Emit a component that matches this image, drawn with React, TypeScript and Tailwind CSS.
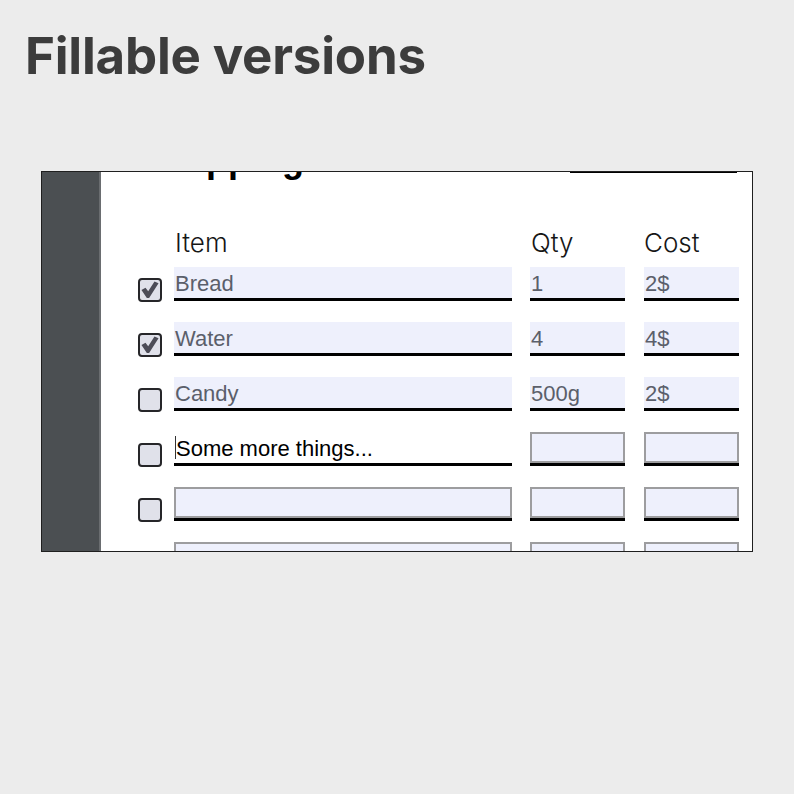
const rows = [
  { checked: true, item: 'Bread', qty: '1', cost: '2$', kind: 'filled' },
  { checked: true, item: 'Water', qty: '4', cost: '4$', kind: 'filled' },
  { checked: false, item: 'Candy', qty: '500g', cost: '2$', kind: 'filled' },
  { checked: false, item: 'Some more things...', qty: '', cost: '', kind: 'typing' },
  { checked: false, item: '', qty: '', cost: '', kind: 'empty' },
  { checked: false, item: '', qty: '', cost: '', kind: 'empty' },
];

function Checkbox({ checked }: { checked: boolean }) {
  return (
    <div className="w-[24px] h-[24px] shrink-0 rounded-[4px] border-[2.5px] border-[#262629] bg-[#e0e1ea] flex items-center justify-center">
      {checked && (
        <svg viewBox="0 0 20 20" className="w-[18px] h-[18px]">
          <path d="M0.5 10 L5 7.5 L8 11.5 L15 0.5 L19.5 2.5 L9 19 L6.5 19 Z" fill="#4c4c57" />
        </svg>
      )}
    </div>
  );
}

// one form field: light fill, optional grey box, black rule underneath
function Field({ width, text, boxed, plain, caret }: { width: string; text?: string; boxed?: boolean; plain?: boolean; caret?: boolean }) {
  return (
    <div className={`${width} shrink-0 flex flex-col`}>
      <div
        className={`h-[31px] flex items-center pl-[1px] text-[22px] leading-[31px] ${
          plain ? 'bg-white text-black' : 'bg-[#eef0fc] text-[#5b5f6b]'
        } ${boxed ? 'border-2 border-[#9d9d9f]' : ''}`}
      >
        {caret && <span className="w-px h-[23px] bg-[#333]" />}
        {text && <span className="pt-[1px]">{text}</span>}
      </div>
      <div className="h-[3px] bg-black" />
    </div>
  );
}

export default function App() {
  return (
    <div className="w-[794px] h-[794px] bg-[#ececec] overflow-hidden" style={{ fontFamily: 'Inter, sans-serif' }}>
      <h1 className="pl-[25px] pt-[30px] text-[51px] leading-[51px] font-bold text-[#3c3c3c] tracking-[-0.2px]">
        Fillable versions
      </h1>

      <div className="ml-[41px] mt-[90px] w-[712px] h-[381px] border-[1.5px] border-[#1f1f1f] bg-white flex overflow-hidden">
        <div className="w-[59px] shrink-0 bg-[#4b4f52] border-r-2 border-[#6a6d70]" />

        <div className="flex-1 flex flex-col pl-[37px]">
          {/* page title, scrolled mostly out of view */}
          <div
            className="-mt-[30px] h-[36px] flex items-start text-[36px] leading-[36px] font-bold text-black"
            style={{ fontFamily: '"Liberation Sans", Arial, sans-serif' }}
          >
            <span className="w-[362px] shrink-0">Shopping List</span>
            <span className="w-[70px] shrink-0 -mt-[2px]">Date</span>
            <span className="mt-[29px] w-[167px] h-[2px] bg-black" />
          </div>

          <div className="mt-[52px] flex text-[26px] leading-[26px] font-light text-[#161616]">
            <span className="ml-[36px] w-[356px] pl-[1px]">Item</span>
            <span className="w-[114px] pl-[1px]">Qty</span>
            <span>Cost</span>
          </div>

          <div
            className="mt-[11px] flex flex-col gap-[21px]"
            style={{ fontFamily: '"Liberation Sans", Arial, sans-serif' }}
          >
            {rows.map((r, i) => (
              <div key={i} className="flex items-end">
                <div className="mb-[-1px]">
                  <Checkbox checked={r.checked} />
                </div>
                <div className="ml-[12px]">
                  <Field
                    width="w-[338px]"
                    text={r.item}
                    plain={r.kind === 'typing'}
                    caret={r.kind === 'typing'}
                    boxed={r.kind === 'empty'}
                  />
                </div>
                <div className="ml-[18px]">
                  <Field width="w-[95px]" text={r.qty} boxed={r.kind !== 'filled'} />
                </div>
                <div className="ml-[19px]">
                  <Field width="w-[95px]" text={r.cost} boxed={r.kind !== 'filled'} />
                </div>
              </div>
            ))}
          </div>
        </div>
      </div>
    </div>
  );
}
